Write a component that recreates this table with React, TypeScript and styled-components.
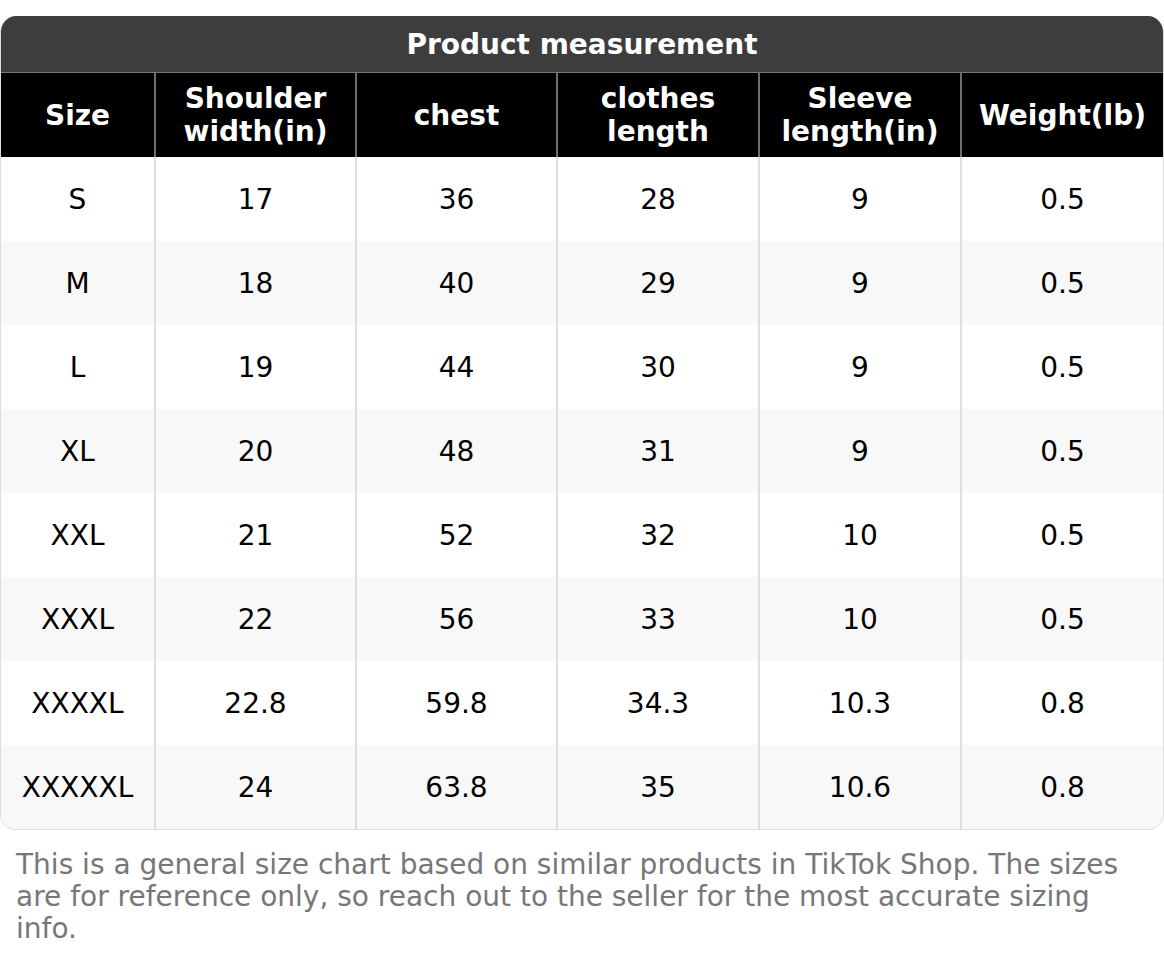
import React from "react";
import styled, { createGlobalStyle } from "styled-components";

const Global = createGlobalStyle`
  html, body { margin: 0; padding: 0; background: #ffffff; }
  body { font-family: "DejaVu Sans", "Noto Sans", sans-serif; color: #000; }
`;

const Page = styled.div`
  padding-top: 16px;
  width: 1164px;
`;

const Card = styled.div`
  border-radius: 16px;
  overflow: hidden;
  border: 1px solid #dddddd;
  border-top: none;
  background: #ffffff;
`;

const TitleBar = styled.div`
  height: 56px;
  background: #3d3d3d;
  color: #ffffff;
  font-weight: bold;
  font-size: 28px;
  display: flex;
  align-items: center;
  justify-content: center;
  border-bottom: 1px solid #777777;
  margin: 0 -1px;
`;

const Table = styled.table`
  width: 100%;
  border-collapse: collapse;
  table-layout: fixed;
`;

const HeadCell = styled.th`
  background: #000000;
  color: #ffffff;
  font-weight: bold;
  font-size: 28px;
  line-height: 33px;
  height: 84px;
  padding: 0;
  text-align: center;
  border-left: 2px solid #6e6e6e;
  &:first-child { border-left: none; }
`;

const Row = styled.tr<{ $alt: boolean }>`
  background: ${(p) => (p.$alt ? "#f8f8f8" : "#ffffff")};
`;

const Cell = styled.td`
  height: 84px;
  padding: 0;
  text-align: center;
  font-size: 28px;
  color: #000000;
  border-left: 2px solid #dedede;
  &:first-child { border-left: none; }
`;

const Note = styled.p`
  margin: 19px 16px 0;
  font-size: 28px;
  line-height: 32px;
  color: #777777;
`;

const headers = [
  ["Size"],
  ["Shoulder", "width(in)"],
  ["chest"],
  ["clothes", "length"],
  ["Sleeve", "length(in)"],
  ["Weight(lb)"],
];

const rows = [
  ["S", "17", "36", "28", "9", "0.5"],
  ["M", "18", "40", "29", "9", "0.5"],
  ["L", "19", "44", "30", "9", "0.5"],
  ["XL", "20", "48", "31", "9", "0.5"],
  ["XXL", "21", "52", "32", "10", "0.5"],
  ["XXXL", "22", "56", "33", "10", "0.5"],
  ["XXXXL", "22.8", "59.8", "34.3", "10.3", "0.8"],
  ["XXXXXL", "24", "63.8", "35", "10.6", "0.8"],
];

const widths = [154, 201, 201, 202, 202, 202];

export default function App() {
  return (
    <Page>
      <Global />
      <Card>
        <TitleBar>Product measurement</TitleBar>
        <Table>
          <colgroup>
            {widths.map((w, i) => (
              <col key={i} style={{ width: w }} />
            ))}
          </colgroup>
          <thead>
            <tr>
              {headers.map((h, i) => (
                <HeadCell key={i}>
                  {h.map((line, j) => (
                    <React.Fragment key={j}>
                      {j > 0 && <br />}
                      {line}
                    </React.Fragment>
                  ))}
                </HeadCell>
              ))}
            </tr>
          </thead>
          <tbody>
            {rows.map((r, i) => (
              <Row key={i} $alt={i % 2 === 1}>
                {r.map((c, j) => (
                  <Cell key={j}>{c}</Cell>
                ))}
              </Row>
            ))}
          </tbody>
        </Table>
      </Card>
      <Note>
        This is a general size chart based on similar products in TikTok Shop. The sizes are for reference only, so reach out to the seller for the most accurate sizing info.
      </Note>
    </Page>
  );
}
